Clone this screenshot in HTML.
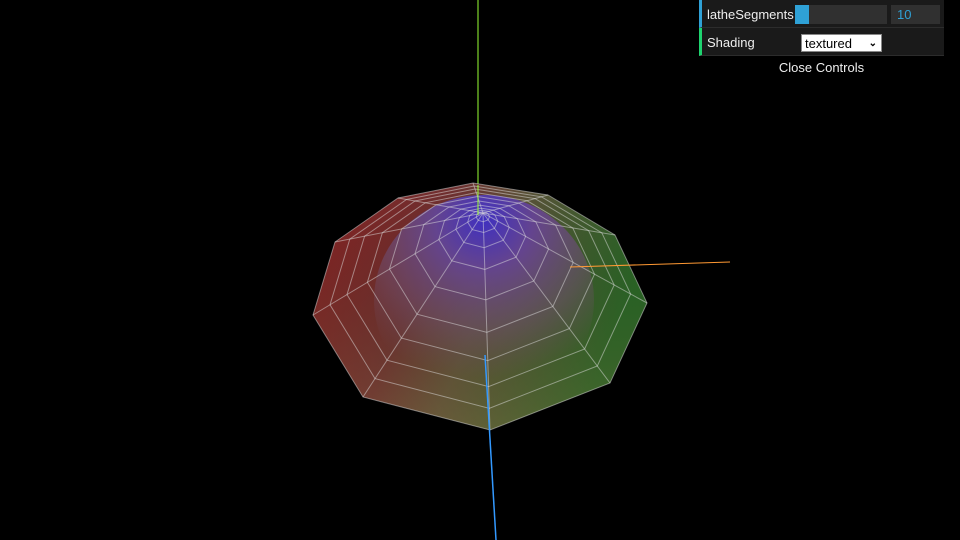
<!DOCTYPE html>
<html><head><meta charset="utf-8"><style>
body{margin:0;width:960px;height:540px;background:#000;overflow:hidden;font-family:"Liberation Sans",sans-serif;position:relative}
svg{position:absolute;left:0;top:0}
.gui{position:absolute;left:699px;top:0;width:245px;font-size:13px;color:#eee}
.row{height:27px;background:#1a1a1a;border-bottom:1px solid #2c2c2c;position:relative}
.r1{border-left:3px solid #2fa1d6}.r2{border-left:3px solid #1ed36f}
.lbl{position:absolute;left:5px;top:7px}
.sl{position:absolute;left:93px;top:5px;width:92px;height:19px;background:#303030}
.sl i{display:block;width:14px;height:19px;background:#2fa1d6}
.num{position:absolute;left:189px;top:5px;width:49px;height:19px;background:#303030;color:#2fa1d6;font-size:13px;line-height:19px;text-indent:6px}
.sel{position:absolute;left:99px;top:6px;width:81px;height:18px;background:#fff;color:#000;font-size:13px;line-height:18px;text-indent:3px;border:1px solid #888;box-sizing:border-box}
.sel b{position:absolute;right:4px;top:0;font-weight:bold;font-size:10px}
.close{text-align:center;padding-top:4px;font-size:13px;color:#eee}
</style></head><body>
<svg width="960" height="540" id="s">
<defs>
<linearGradient id="g" x1="0" y1="0" x2="1" y2="0.3">
<stop offset="0" stop-color="#8e2222"/><stop offset="0.4" stop-color="#6e3030"/><stop offset="0.6" stop-color="#5a5238"/><stop offset="1" stop-color="#266a26"/></linearGradient>
<linearGradient id="v" x1="0" y1="0" x2="0" y2="1">
<stop offset="0" stop-color="#000" stop-opacity="0"/><stop offset="1" stop-color="#8a6a40" stop-opacity="0.35"/></linearGradient>
<radialGradient id="d" cx="0.5" cy="0.12" r="0.75">
<stop offset="0" stop-color="#4030c0"/><stop offset="0.3" stop-color="#64448e"/><stop offset="0.7" stop-color="#705070" stop-opacity="0.5"/><stop offset="1" stop-color="#705060" stop-opacity="0"/></radialGradient>
<clipPath id="c"><polygon id="cp"/></clipPath>
</defs>
<line x1="478" y1="0" x2="478" y2="185" stroke="#9f3" stroke-width="1"/>
<polygon id="outer" fill="url(#g)"/>
<polygon id="outer2" fill="url(#v)"/>
<ellipse cx="484" cy="300" rx="110" ry="105" fill="url(#d)" clip-path="url(#c)"/>
<g id="lines" stroke="#ddd" stroke-opacity="0.5" fill="none" stroke-width="1"></g>
<line x1="478" y1="185" x2="478" y2="215" stroke="#9f3" stroke-width="1"/>
<line x1="485" y1="355" x2="496" y2="540" stroke="#39f" stroke-width="1.5"/>
<line x1="570" y1="267" x2="730" y2="262" stroke="#f93" stroke-width="1"/>
</svg>
<div class="gui">
<div class="row r1"><span class="lbl">latheSegments</span><div class="sl"><i></i></div><div class="num">10</div></div>
<div class="row r2"><span class="lbl">Shading</span><div class="sel">textured<b>&#8964;</b></div></div>
<div class="close">Close Controls</div>
</div>
<script>
var O=[[473,183],[548,195],[615,235],[647,303],[610,383],[490,430],[363,397],[313,315],[335,242],[398,198]];
var A=[483,213];
var pts=O.map(p=>p.join(',')).join(' ');
['outer','outer2','cp'].forEach(id=>document.getElementById(id).setAttribute('points',pts));
var g=document.getElementById('lines'),ns='http://www.w3.org/2000/svg';
[0.04,0.09,0.16,0.26,0.4,0.55,0.68,0.8,0.9,1].forEach(function(t){
var pg=document.createElementNS(ns,'polygon');
pg.setAttribute('points',O.map(p=>[A[0]+t*(p[0]-A[0]),A[1]+t*(p[1]-A[1])].join(',')).join(' '));
g.appendChild(pg);});
O.forEach(function(p){var l=document.createElementNS(ns,'line');
l.setAttribute('x1',A[0]);l.setAttribute('y1',A[1]);l.setAttribute('x2',p[0]);l.setAttribute('y2',p[1]);g.appendChild(l);});
</script>
</body></html>
